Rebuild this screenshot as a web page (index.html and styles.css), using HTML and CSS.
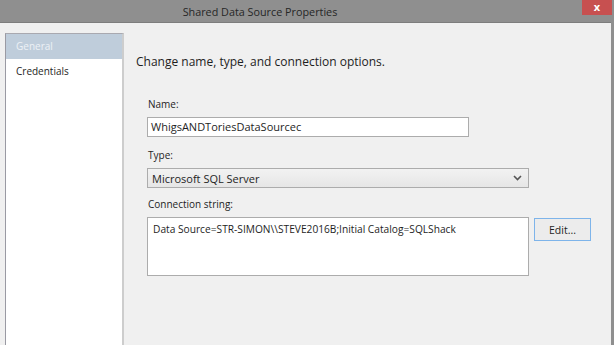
FILE: index.html
```html
<!DOCTYPE html>
<html lang="en">
<head>
    <meta charset="UTF-8">
    <meta name="viewport" content="width=device-width, initial-scale=1.0">
    <title>Shared Data Source Properties</title>

    <link rel="stylesheet" href="styles.css">
</head>

<body>

<div class="window">
    <div class="titlebar">
        <span class="title">Shared Data Source Properties</span>
        <div class="close">x</div>
    </div>

    <div class="body">
        <div class="sidebar">
            <div class="nav-item active">General</div>
            <div class="nav-item">Credentials</div>
        </div>

        <div class="content">
            <h1>Change name, type, and connection options.</h1>

            <div class="field">
                <label for="name">Name:</label>
                <div class="input name-input" id="name">WhigsANDToriesDataSourcec</div>
            </div>

            <div class="field type-field">
                <label for="type">Type:</label>
                <div class="select" id="type">
                    <span>Microsoft SQL Server</span>
                    <svg width="9" height="6" viewBox="0 0 9 6">
                        <path d="M1 1 L4.5 4.5 L8 1" fill="none" stroke="#555" stroke-width="1.6"/>
                    </svg>
                </div>
            </div>

            <div class="field">
                <label for="conn">Connection string:</label>
                <div class="conn-row">
                    <div class="input textarea" id="conn">Data Source=STR-SIMON\\STEVE2016B;Initial Catalog=SQLShack</div>
                    <button type="button">Edit...</button>
                </div>
            </div>
        </div>
    </div>
</div>

</body>
</html>
```

FILE: styles.css
```css
body {
    margin: 0;
    font-family: "Open Sans", "Liberation Sans", sans-serif;
    font-size: 10px;
    color: #1e1e1e;
}

/* Dialog frame: gray window chrome */
.window {
    width: 614px;
    height: 345px;
    background-color: #8f8f8f;
    display: flex;
    flex-direction: column;
    overflow: hidden;
}

.titlebar {
    position: relative;
    height: 22px;
    display: flex;
    align-items: center;
    justify-content: center;
    flex-shrink: 0;
    padding-right: 94px;
}

.titlebar .title {
    font-size: 10.8px;
    color: #262626;
    margin-top: 1px;
}

/* Red close button sits over the top right corner */
.close {
    position: absolute;
    top: 0;
    right: 2px;
    width: 30px;
    height: 15px;
    background-color: #c75050;
    color: white;
    font-weight: bold;
    font-size: 11px;
    line-height: 13px;
    text-align: center;
}

/* Dialog client area */
.body {
    flex: 1;
    display: flex;
    background-color: #f0f0f0;
    border-top: 1px solid #7d7d7d;
    margin-right: 3px;
}

/* Page list on the left */
.sidebar {
    width: 116px;
    margin: 10px 0 0 5px;
    background-color: white;
    border-top: 1px solid #a9a9b0;
    border-left: 1px solid #9a9aa3;
    border-right: 2px solid #cdcdcd;
}

.nav-item {
    height: 25px;
    line-height: 25px;
    padding-left: 10px;
}

.nav-item.active {
    background-color: #bfcddb;
    color: #edf1f6;
}

/* Right hand side with the form */
.content {
    flex: 1;
    padding: 30px 0 0 12px;
}

.content h1 {
    font-size: 12px;
    line-height: 18px;
    font-weight: normal;
    margin: 0 0 25px 0;
    color: #1e1e1e;
}

.field {
    display: flex;
    flex-direction: column;
    padding-left: 11px;
    margin-bottom: 10px;
}

.field.type-field {
    margin-bottom: 8px;
}

.field label {
    margin-left: 1px;
    margin-bottom: 5px;
    line-height: 16px;
}

/* Text boxes */
.input {
    background-color: white;
    border: 1px solid #acacac;
    box-sizing: border-box;
    padding: 1px 3px;
    line-height: 16px;
    font-size: 11px;
}

.name-input {
    width: 322px;
    height: 20px;
}

/* Drop-down list */
.select {
    width: 382px;
    height: 20px;
    box-sizing: border-box;
    border: 1px solid #acacac;
    background: linear-gradient(#f2f2f2, #e6e6e6);
    display: flex;
    align-items: center;
    justify-content: space-between;
    padding: 0 6px 0 4px;
    font-size: 11px;
}

.conn-row {
    display: flex;
    align-items: flex-start;
    gap: 5px;
}

.textarea {
    width: 382px;
    height: 59px;
    padding: 3px 5px;
    font-size: 10.2px;
}

/* Edit button with blue default border */
.conn-row button {
    width: 57px;
    height: 23px;
    margin-top: 1px;
    font-family: inherit;
    font-size: 10.5px;
    color: #1e1e1e;
    background-color: #ececec;
    border: 1px solid #7eb4ea;
    padding: 0;
}
```
